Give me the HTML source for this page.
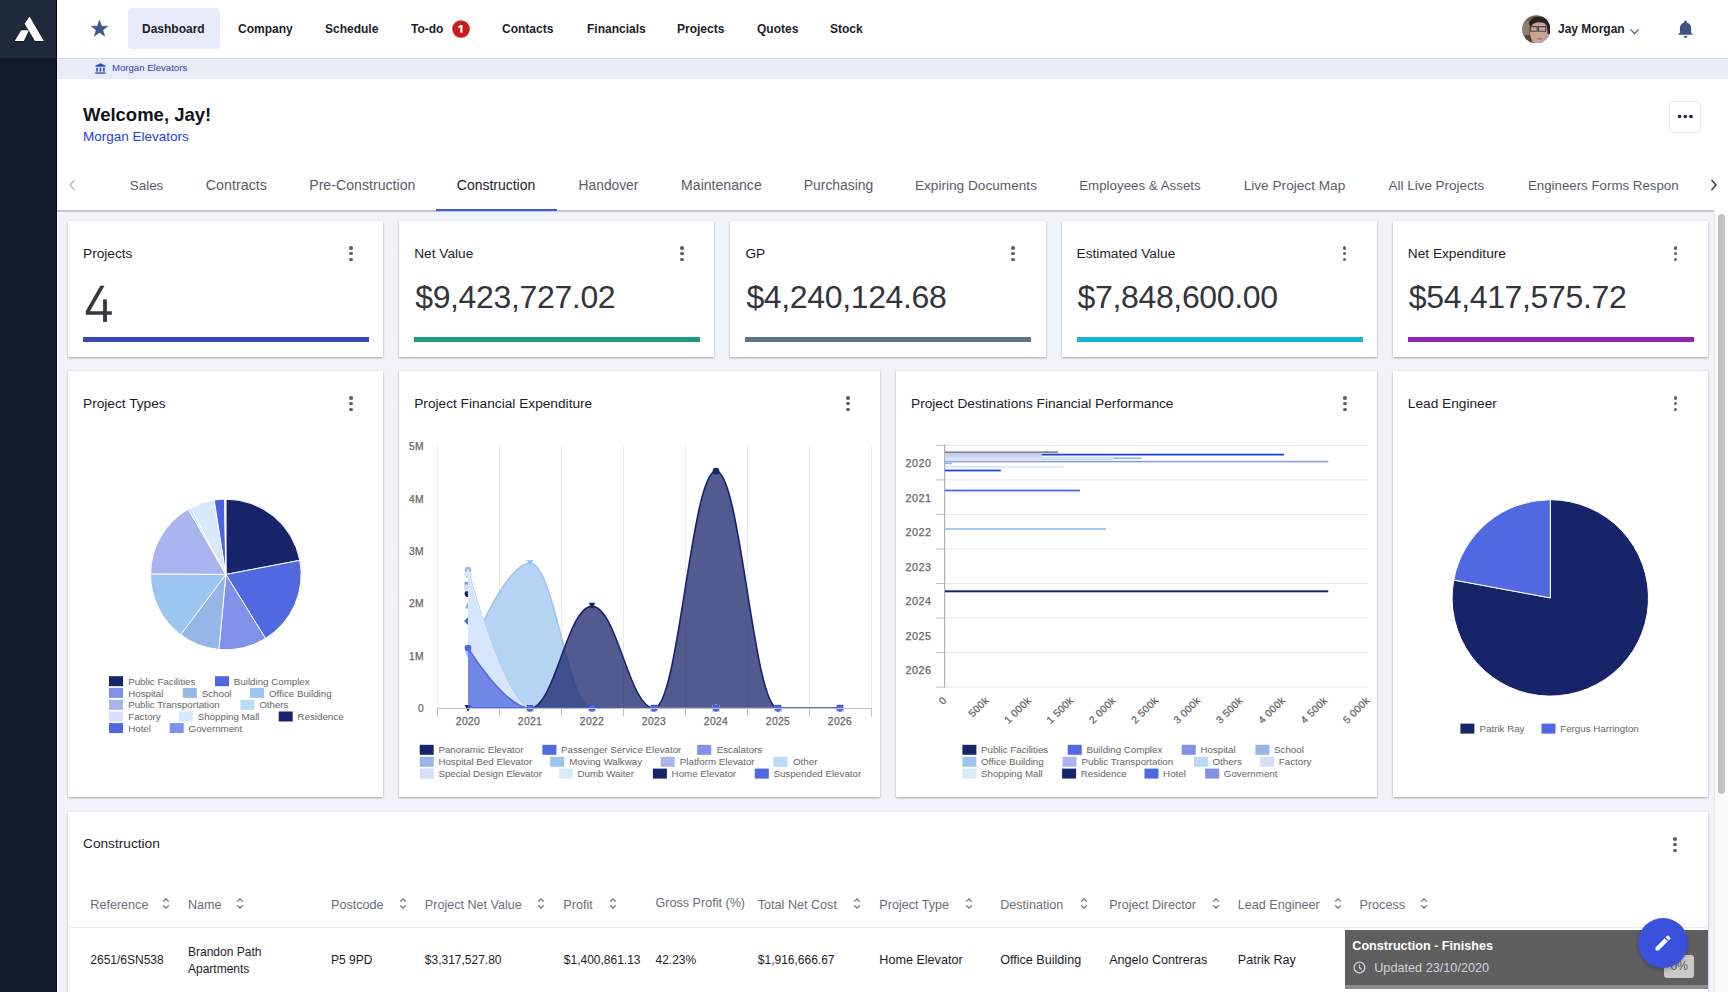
<!DOCTYPE html>
<html><head><meta charset="utf-8">
<style>
*{box-sizing:border-box;margin:0;padding:0}
html,body{width:1728px;height:992px;overflow:hidden;background:#fff;font-family:"Liberation Sans",sans-serif;color:#1b1d29}
.abs{position:absolute}
#side{left:0;top:0;width:57px;height:992px;background:#121a2c;border-right:1px solid #05070c}
#logo{left:0;top:0;width:56px;height:58px;background:#1e293b}
#nav{left:57px;top:0;width:1671px;height:59px;background:#fff;border-bottom:1px solid #d7dbe3}
.ni{position:absolute;top:22px;font-size:12px;font-weight:700;color:#1b1d29;white-space:nowrap;line-height:14px}
#pill{left:128px;top:8px;width:92px;height:41px;background:#e8ebfa;border-radius:4px}
#crumb{left:57px;top:59px;width:1671px;height:20px;background:#e8ecf9}
#crumb span{position:absolute;left:55px;top:3px;font-size:9.6px;color:#3443a8;white-space:nowrap}
#welcome{left:83px;top:104px;font-size:18.5px;font-weight:700;color:#11131c;white-space:nowrap}
#company{left:83px;top:129px;font-size:13.5px;color:#1e3ee0;white-space:nowrap}
#more{left:1669px;top:101px;width:32px;height:32px;border:1px solid #e3e6ec;border-radius:4px;background:#fff}
.tab{position:absolute;top:177px;font-size:13.6px;color:#5a5d66;white-space:nowrap;line-height:16px}
#tabline{left:57px;top:210px;width:1657px;height:2px;background:#c4c8ce}
#tabact{left:436px;top:209px;width:121px;height:2px;background:#4557de}
#content{left:58px;top:212px;width:1656px;height:780px;background:#f0f3f7}
#sbar{left:1714px;top:212px;width:14px;height:780px;background:#fafafa;border-left:1px solid #e8e8ea}
#sthumb{left:1717.5px;top:213.5px;width:7.8px;height:580px;background:#c1c1c1;border-radius:4px}
.card{position:absolute;background:#fff;box-shadow:0 1px 2px rgba(0,0,0,0.28),0 0 1px rgba(0,0,0,0.12)}
.ctitle{position:absolute;left:15px;top:24.5px;font-size:13.7px;color:#1b1d29;white-space:nowrap;line-height:16px}
.kebab{position:absolute;width:4px;height:16px}
.kebab i{position:absolute;left:0;width:3.6px;height:3.6px;border-radius:50%;background:#5f6168}
.big{position:absolute;left:16px;top:58px;font-size:32px;color:#33353c;white-space:nowrap;letter-spacing:-0.35px;line-height:37px}
.lg{font-size:9.75px;fill:#666;font-family:"Liberation Sans",sans-serif}
.ax{font-size:10.3px;fill:#666;stroke:#666;stroke-width:0.25px;font-family:"Liberation Sans",sans-serif;letter-spacing:0.35px}
.th{position:absolute;font-size:12.6px;color:#6b6e76;white-space:nowrap;line-height:14px}
.td{position:absolute;font-size:12px;color:#1b1d29;white-space:nowrap;line-height:14px}
.bar{position:absolute;left:15px;top:116px;width:286px;height:5px}
</style></head><body>
<div id="side" class="abs"></div>
<div id="logo" class="abs">
<svg width="56" height="58" viewBox="0 0 56 58" style="position:absolute;left:0;top:0"><g fill="#fff" stroke="#070a14" stroke-width="0.9" stroke-linejoin="miter" paint-order="stroke"><path d="M29.5 16.6 L43.9 41 L35 41 L24.6 23.8 Z"/><path d="M21.3 30.3 L28.9 30.3 L23.9 41 L14.6 41 Z"/></g></svg>
</div>
<div id="nav" class="abs"></div>
<div id="pill" class="abs"></div>
<svg class="abs" style="left:80px;top:10px" width="40" height="40" viewBox="0 0 40 40"><path d="M19.50 10.30 L21.55 16.18 L27.77 16.31 L22.81 20.08 L24.61 26.04 L19.50 22.48 L14.39 26.04 L16.19 20.08 L11.23 16.31 L17.45 16.18Z" fill="#3e5283" stroke="#3e5283" stroke-width="0.6" stroke-linejoin="round"/></svg>
<div class="ni" style="left:142px">Dashboard</div>
<div class="ni" style="left:238px">Company</div>
<div class="ni" style="left:325px">Schedule</div>
<div class="ni" style="left:411px">To-do</div>
<svg class="abs" style="left:451.5px;top:20px" width="18" height="18" viewBox="0 0 18 18"><circle cx="9" cy="9" r="8.8" fill="#c81e1e"/><path d="M8.2 5 H10.5 V12.8 H8.3 V7.6 L6.2 8.1 V6.4 Z" fill="#fff"/></svg>
<div class="ni" style="left:502px">Contacts</div>
<div class="ni" style="left:587px">Financials</div>
<div class="ni" style="left:677px">Projects</div>
<div class="ni" style="left:757px">Quotes</div>
<div class="ni" style="left:830px">Stock</div>
<svg class="abs" style="left:1521.9px;top:14.9px" width="28.6" height="28.6" viewBox="0 0 28.6 28.6"><defs><clipPath id="av"><circle cx="14.3" cy="14.3" r="14.1"/></clipPath></defs><g clip-path="url(#av)"><rect width="29" height="29" fill="#6f6455"/><rect x="1" y="6" width="6" height="18" fill="#8b806d"/><rect x="3" y="20" width="6" height="9" fill="#4e4438"/><ellipse cx="17.6" cy="17.6" rx="9.6" ry="12.5" fill="#c9a29a"/><path d="M7 9 C8 3 13 1.5 18 1.8 C24 2.2 27.5 6 28 12 L28 19 L25.6 19 C25.6 13 24.5 9 22 8 C17 6.5 12 7 9 11 Z" fill="#2a2220"/><path d="M8.6 11.6 h6.6 v4.6 h-6.6z M16.6 11.6 h7.2 v4.6 h-7.2z M15.2 13 h1.4" fill="none" stroke="#4b4444" stroke-width="1.1"/><ellipse cx="17.8" cy="23.8" rx="3.2" ry="1" fill="#b07e7a"/></g></svg>
<div class="ni" style="left:1558px">Jay Morgan</div>
<svg class="abs" style="left:1629px;top:27px" width="11" height="8" viewBox="0 0 11 8"><path d="M1.4 2.4 L5.6 6.6 L9.6 2.4" stroke="#3e5283" stroke-width="1.2" fill="none"/></svg>
<svg class="abs" style="left:1676px;top:19px" width="19" height="20" viewBox="0 0 19 20"><path d="M9.5 1.5c.8 0 1.3.6 1.3 1.3v.6c2.6.6 4.3 2.9 4.3 5.6v4.5l1.8 2.2H2.1l1.8-2.2V9c0-2.7 1.7-5 4.3-5.6v-.6c0-.7.5-1.3 1.3-1.3z" fill="#3e5283"/><path d="M7.6 17h3.8c0 1.1-.8 1.9-1.9 1.9S7.6 18.1 7.6 17z" fill="#3e5283"/></svg>

<div id="crumb" class="abs">
<svg style="position:absolute;left:38px;top:4px" width="11" height="11" viewBox="0 0 11 11"><path d="M5.5 0.3 L10.7 2.8 V3.8 H0.3 V2.8 Z" fill="#2f45c8"/><rect x="1.3" y="4.7" width="1.6" height="4" fill="#2f45c8"/><rect x="4.7" y="4.7" width="1.6" height="4" fill="#2f45c8"/><rect x="8.1" y="4.7" width="1.6" height="4" fill="#2f45c8"/><rect x="0.3" y="9.4" width="10.4" height="1.3" fill="#2f45c8"/></svg>
<span>Morgan Elevators</span></div>

<div id="welcome" class="abs">Welcome, Jay!</div>
<div id="company" class="abs">Morgan Elevators</div>
<div id="more" class="abs"><svg width="30" height="30" viewBox="0 0 30 30" style="position:absolute;left:0;top:0"><circle cx="9.6" cy="14.5" r="1.8" fill="#1b2340"/><circle cx="15.3" cy="14.5" r="1.8" fill="#1b2340"/><circle cx="21" cy="14.5" r="1.8" fill="#1b2340"/></svg></div>

<svg class="abs" style="left:67px;top:178px" width="10" height="14" viewBox="0 0 10 14"><path d="M7.5 2 L3 7 L7.5 12" stroke="#b9bcc3" stroke-width="1.4" fill="none"/></svg>
<div class="tab" style="left:129.8px;top:177.50px;font-size:13.39px">Sales</div>
<div class="tab" style="left:205.8px;top:177.00px;font-size:14.29px">Contracts</div>
<div class="tab" style="left:309.2px;top:177.00px;font-size:14.16px">Pre-Construction</div>
<div class="tab" style="left:456.8px;top:177.00px;font-size:13.98px;color:#1b1d29">Construction</div>
<div class="tab" style="left:578.6px;top:177.50px;font-size:13.79px">Handover</div>
<div class="tab" style="left:681.1px;top:177.00px;font-size:14.08px">Maintenance</div>
<div class="tab" style="left:803.8px;top:177.00px;font-size:13.89px">Purchasing</div>
<div class="tab" style="left:914.9px;top:177.50px;font-size:13.65px">Expiring Documents</div>
<div class="tab" style="left:1079.2px;top:177.50px;font-size:13.33px">Employees &amp; Assets</div>
<div class="tab" style="left:1243.7px;top:177.50px;font-size:13.65px">Live Project Map</div>
<div class="tab" style="left:1388.5px;top:177.50px;font-size:13.46px">All Live Projects</div>
<div class="tab" style="left:1527.9px;top:177.50px;font-size:13.3px">Engineers Forms Respon</div>
<svg class="abs" style="left:1709px;top:178px" width="10" height="14" viewBox="0 0 10 14"><path d="M2.5 2 L7 7 L2.5 12" stroke="#3a3d46" stroke-width="1.5" fill="none"/></svg>
<div id="tabline" class="abs"></div>
<div id="tabact" class="abs"></div>

<div id="content" class="abs"></div>
<div id="sbar" class="abs"></div>
<div id="sthumb" class="abs"></div>

<!-- STAT CARDS -->
<div class="card" style="left:68px;top:221px;width:315.2px;height:136px">
 <div class="ctitle">Projects</div>
 <div class="kebab" style="left:281px;top:25px"><i style="top:0"></i><i style="top:5.9px"></i><i style="top:11.8px"></i></div>
 <svg class="abs" style="left:0;top:0" width="130" height="110" viewBox="68 221 130 110"><path d="M100.3 285.8 H104.5 L89.9 311.2 H111.8 V314.7 H85.8 V311.0 Z" fill="#37383d"/><rect x="103.1" y="299.4" width="3.8" height="22.5" fill="#37383d"/></svg>
 <div class="bar" style="background:#3b48b8"></div>
</div>
<div class="card" style="left:399.2px;top:221px;width:315.2px;height:136px">
 <div class="ctitle">Net Value</div>
 <div class="kebab" style="left:281px;top:25px"><i style="top:0"></i><i style="top:5.9px"></i><i style="top:11.8px"></i></div>
 <div class="big">$9,423,727.02</div>
 <div class="bar" style="background:#1f9a88"></div>
</div>
<div class="card" style="left:730.4px;top:221px;width:315.2px;height:136px">
 <div class="ctitle">GP</div>
 <div class="kebab" style="left:281px;top:25px"><i style="top:0"></i><i style="top:5.9px"></i><i style="top:11.8px"></i></div>
 <div class="big">$4,240,124.68</div>
 <div class="bar" style="background:#5b7785"></div>
</div>
<div class="card" style="left:1061.6px;top:221px;width:315.2px;height:136px">
 <div class="ctitle">Estimated Value</div>
 <div class="kebab" style="left:281px;top:25px"><i style="top:0"></i><i style="top:5.9px"></i><i style="top:11.8px"></i></div>
 <div class="big">$7,848,600.00</div>
 <div class="bar" style="background:#18b4d4"></div>
</div>
<div class="card" style="left:1392.8px;top:221px;width:315.2px;height:136px">
 <div class="ctitle">Net Expenditure</div>
 <div class="kebab" style="left:281px;top:25px"><i style="top:0"></i><i style="top:5.9px"></i><i style="top:11.8px"></i></div>
 <div class="big">$54,417,575.72</div>
 <div class="bar" style="background:#9122b4"></div>
</div>

<!-- CHART CARDS -->
<div class="card" id="c1" style="left:68px;top:371px;width:315.2px;height:426px">
 <div class="ctitle">Project Types</div>
 <div class="kebab" style="left:281px;top:25px"><i style="top:0"></i><i style="top:5.9px"></i><i style="top:11.8px"></i></div>
</div>
<div class="card" id="c2" style="left:399.2px;top:371px;width:480.8px;height:426px">
 <div class="ctitle">Project Financial Expenditure</div>
 <div class="kebab" style="left:447px;top:25px"><i style="top:0"></i><i style="top:5.9px"></i><i style="top:11.8px"></i></div>
</div>
<div class="card" id="c3" style="left:896px;top:371px;width:480.8px;height:426px">
 <div class="ctitle">Project Destinations Financial Performance</div>
 <div class="kebab" style="left:447px;top:25px"><i style="top:0"></i><i style="top:5.9px"></i><i style="top:11.8px"></i></div>
</div>
<div class="card" id="c4" style="left:1392.8px;top:371px;width:315.2px;height:426px">
 <div class="ctitle">Lead Engineer</div>
 <div class="kebab" style="left:281px;top:25px"><i style="top:0"></i><i style="top:5.9px"></i><i style="top:11.8px"></i></div>
</div>

<svg class="abs" style="left:0;top:0" width="1728" height="992" viewBox="0 0 1728 992">
<defs><clipPath id="plotclip"><rect x="437" y="440" width="434" height="269"/></clipPath></defs>
<path d="M225.85 574.45L225.85 499.15A75.3 75.3 0 0 1 299.82 560.34Z" fill="#18246a" stroke="#fff" stroke-width="1" stroke-linejoin="round"/>
<path d="M225.85 574.45L299.82 560.34A75.3 75.3 0 0 1 265.53 638.45Z" fill="#5068e0" stroke="#fff" stroke-width="1" stroke-linejoin="round"/>
<path d="M225.85 574.45L265.53 638.45A75.3 75.3 0 0 1 218.89 649.43Z" fill="#8091ea" stroke="#fff" stroke-width="1" stroke-linejoin="round"/>
<path d="M225.85 574.45L218.89 649.43A75.3 75.3 0 0 1 180.64 634.67Z" fill="#95b6e6" stroke="#fff" stroke-width="1" stroke-linejoin="round"/>
<path d="M225.85 574.45L180.64 634.67A75.3 75.3 0 0 1 150.55 573.92Z" fill="#9cc6f0" stroke="#fff" stroke-width="1" stroke-linejoin="round"/>
<path d="M225.85 574.45L150.55 573.92A75.3 75.3 0 0 1 188.43 509.11Z" fill="#aab5f0" stroke="#fff" stroke-width="1" stroke-linejoin="round"/>
<path d="M225.85 574.45L188.43 509.11A75.3 75.3 0 0 1 190.61 507.9Z" fill="#b9daf8" stroke="#fff" stroke-width="1" stroke-linejoin="round"/>
<path d="M225.85 574.45L190.61 507.9A75.3 75.3 0 0 1 214.2 500.06Z" fill="#d9e9fc" stroke="#fff" stroke-width="1" stroke-linejoin="round"/>
<path d="M225.85 574.45L214.2 500.06A75.3 75.3 0 0 1 224.67 499.16Z" fill="#4a62e0" stroke="#fff" stroke-width="1" stroke-linejoin="round"/>
<path d="M225.85 574.45L224.67 499.16A75.3 75.3 0 0 1 225.85 499.15Z" fill="#8091ea" stroke="#fff" stroke-width="1" stroke-linejoin="round"/>
<path d="M1550.3 597.9L1550.3 499.7A98.2 98.2 0 1 1 1453.74 580Z" fill="#18246a" stroke="#fff" stroke-width="1" stroke-linejoin="round"/>
<path d="M1550.3 597.9L1453.74 580A98.2 98.2 0 0 1 1550.3 499.7Z" fill="#5068e0" stroke="#fff" stroke-width="1" stroke-linejoin="round"/>
<rect x="109" y="676.2" width="14" height="10" fill="#18246a"/>
<text x="128.2" y="684.8" class="lg">Public Facilities</text>
<rect x="215" y="676.2" width="14" height="10" fill="#5068e0"/>
<text x="233.8" y="684.8" class="lg">Building Complex</text>
<rect x="109" y="687.9" width="14" height="10" fill="#8091ea"/>
<text x="128.2" y="696.5" class="lg">Hospital</text>
<rect x="182.8" y="687.9" width="14" height="10" fill="#95b6e6"/>
<text x="201.7" y="696.5" class="lg">School</text>
<rect x="250" y="687.9" width="14" height="10" fill="#9cc6f0"/>
<text x="268.9" y="696.5" class="lg">Office Building</text>
<rect x="109" y="699.8" width="14" height="10" fill="#aab5f0"/>
<text x="128.2" y="708.4" class="lg">Public Transportation</text>
<rect x="240.4" y="699.8" width="14" height="10" fill="#b9daf8"/>
<text x="259.2" y="708.4" class="lg">Others</text>
<rect x="109" y="711.5" width="14" height="10" fill="#d9ddfc"/>
<text x="128.2" y="720.1" class="lg">Factory</text>
<rect x="178.9" y="711.5" width="14" height="10" fill="#d9e9fc"/>
<text x="197.7" y="720.1" class="lg">Shopping Mall</text>
<rect x="278.7" y="711.5" width="14" height="10" fill="#18246a"/>
<text x="297.5" y="720.1" class="lg">Residence</text>
<rect x="109" y="723.1" width="14" height="10" fill="#5068e0"/>
<text x="128.2" y="731.7" class="lg">Hotel</text>
<rect x="169.7" y="723.1" width="14" height="10" fill="#8091ea"/>
<text x="188.6" y="731.7" class="lg">Government</text>
<rect x="419.7" y="744.8" width="14" height="10" fill="#18246a"/>
<text x="438.4" y="753.4" class="lg">Panoramic Elevator</text>
<rect x="542.4" y="744.8" width="14" height="10" fill="#5068e0"/>
<text x="561" y="753.4" class="lg">Passenger Service Elevator</text>
<rect x="697.2" y="744.8" width="14" height="10" fill="#8091ea"/>
<text x="716.7" y="753.4" class="lg">Escalators</text>
<rect x="419.7" y="756.8" width="14" height="10" fill="#95b6e6"/>
<text x="438.4" y="765.4" class="lg">Hospital Bed Elevator</text>
<rect x="550.2" y="756.8" width="14" height="10" fill="#9cc6f0"/>
<text x="569.3" y="765.4" class="lg">Moving Walkway</text>
<rect x="660.7" y="756.8" width="14" height="10" fill="#aab5f0"/>
<text x="679.8" y="765.4" class="lg">Platform Elevator</text>
<rect x="773.4" y="756.8" width="14" height="10" fill="#b9daf8"/>
<text x="793" y="765.4" class="lg">Other</text>
<rect x="419.7" y="768.6" width="14" height="10" fill="#d9ddfc"/>
<text x="438.4" y="777.2" class="lg">Special Design Elevator</text>
<rect x="558.9" y="768.6" width="14" height="10" fill="#d9e9fc"/>
<text x="577.5" y="777.2" class="lg">Dumb Waiter</text>
<rect x="652.9" y="768.6" width="14" height="10" fill="#18246a"/>
<text x="671.6" y="777.2" class="lg">Home Elevator</text>
<rect x="754.8" y="768.6" width="14" height="10" fill="#5068e0"/>
<text x="773.4" y="777.2" class="lg">Suspended Elevator</text>
<rect x="962.4" y="744.8" width="14" height="10" fill="#18246a"/>
<text x="981" y="753.4" class="lg">Public Facilities</text>
<rect x="1067.7" y="744.8" width="14" height="10" fill="#5068e0"/>
<text x="1086.4" y="753.4" class="lg">Building Complex</text>
<rect x="1181.7" y="744.8" width="14" height="10" fill="#8091ea"/>
<text x="1200.4" y="753.4" class="lg">Hospital</text>
<rect x="1255.4" y="744.8" width="14" height="10" fill="#95b6e6"/>
<text x="1274" y="753.4" class="lg">School</text>
<rect x="962.4" y="756.8" width="14" height="10" fill="#9cc6f0"/>
<text x="981" y="765.4" class="lg">Office Building</text>
<rect x="1062.5" y="756.8" width="14" height="10" fill="#aab5f0"/>
<text x="1081.6" y="765.4" class="lg">Public Transportation</text>
<rect x="1193.9" y="756.8" width="14" height="10" fill="#b9daf8"/>
<text x="1212.5" y="765.4" class="lg">Others</text>
<rect x="1260.2" y="756.8" width="14" height="10" fill="#d9ddfc"/>
<text x="1278.8" y="765.4" class="lg">Factory</text>
<rect x="962.4" y="768.6" width="14" height="10" fill="#d9e9fc"/>
<text x="981" y="777.2" class="lg">Shopping Mall</text>
<rect x="1062.1" y="768.6" width="14" height="10" fill="#18246a"/>
<text x="1080.7" y="777.2" class="lg">Residence</text>
<rect x="1144.5" y="768.6" width="14" height="10" fill="#5068e0"/>
<text x="1163.1" y="777.2" class="lg">Hotel</text>
<rect x="1205.2" y="768.6" width="14" height="10" fill="#8091ea"/>
<text x="1223.8" y="777.2" class="lg">Government</text>
<rect x="1460.4" y="723.6" width="14" height="10" fill="#18246a"/>
<text x="1479.5" y="732.2" class="lg">Patrik Ray</text>
<rect x="1541.5" y="723.6" width="14" height="10" fill="#5068e0"/>
<text x="1560.2" y="732.2" class="lg">Fergus Harrington</text>
<line x1="437.5" y1="446" x2="437.5" y2="708" stroke="#e6ebf3" stroke-width="1"/>
<line x1="499.5" y1="446" x2="499.5" y2="708" stroke="#ebebeb" stroke-width="1"/>
<line x1="561.5" y1="446" x2="561.5" y2="708" stroke="#ebebeb" stroke-width="1"/>
<line x1="623.5" y1="446" x2="623.5" y2="708" stroke="#ebebeb" stroke-width="1"/>
<line x1="685.5" y1="446" x2="685.5" y2="708" stroke="#ebebeb" stroke-width="1"/>
<line x1="747.5" y1="446" x2="747.5" y2="708" stroke="#ebebeb" stroke-width="1"/>
<line x1="809.5" y1="446" x2="809.5" y2="708" stroke="#ebebeb" stroke-width="1"/>
<line x1="871.5" y1="446" x2="871.5" y2="708" stroke="#ebebeb" stroke-width="1"/>
<path d="M468 593.65C468 593.65 505.2 708.3 530 708.3C554.8 708.3 567.2 708.3 592 708.3C616.8 708.3 629.2 708.3 654 708.3C678.8 708.3 691.2 471.15 716 471.15C740.8 471.15 753.2 708.3 778 708.3C802.8 708.3 840 708.3 840 708.3L840 708.3L468 708.3Z" fill="#18246a" fill-opacity="0.75" clip-path="url(#plotclip)"/>
<path d="M468 593.65C468 593.65 505.2 708.3 530 708.3C554.8 708.3 567.2 708.3 592 708.3C616.8 708.3 629.2 708.3 654 708.3C678.8 708.3 691.2 471.15 716 471.15C740.8 471.15 753.2 708.3 778 708.3C802.8 708.3 840 708.3 840 708.3" fill="none" stroke="#18246a" stroke-width="1.6" clip-path="url(#plotclip)"/>
<circle cx="468" cy="593.65" r="3.4" fill="#18246a"/>
<circle cx="530" cy="708.3" r="3.4" fill="#18246a"/>
<circle cx="592" cy="708.3" r="3.4" fill="#18246a"/>
<circle cx="654" cy="708.3" r="3.4" fill="#18246a"/>
<circle cx="716" cy="471.15" r="3.4" fill="#18246a"/>
<circle cx="778" cy="708.3" r="3.4" fill="#18246a"/>
<circle cx="840" cy="708.3" r="3.4" fill="#18246a"/>
<path d="M468 620.88C468 620.88 505.2 708.3 530 708.3C554.8 708.3 567.2 708.3 592 708.3C616.8 708.3 629.2 708.3 654 708.3C678.8 708.3 691.2 708.3 716 708.3C740.8 708.3 753.2 708.3 778 708.3C802.8 708.3 840 708.3 840 708.3L840 708.3L468 708.3Z" fill="#5068e0" fill-opacity="0.75" clip-path="url(#plotclip)"/>
<path d="M468 620.88C468 620.88 505.2 708.3 530 708.3C554.8 708.3 567.2 708.3 592 708.3C616.8 708.3 629.2 708.3 654 708.3C678.8 708.3 691.2 708.3 716 708.3C740.8 708.3 753.2 708.3 778 708.3C802.8 708.3 840 708.3 840 708.3" fill="none" stroke="#5068e0" stroke-width="1.6" clip-path="url(#plotclip)"/>
<path d="M468 616.88L472 620.88L468 624.88L464 620.88Z" fill="#5068e0"/>
<path d="M530 704.3L534 708.3L530 712.3L526 708.3Z" fill="#5068e0"/>
<path d="M592 704.3L596 708.3L592 712.3L588 708.3Z" fill="#5068e0"/>
<path d="M654 704.3L658 708.3L654 712.3L650 708.3Z" fill="#5068e0"/>
<path d="M716 704.3L720 708.3L716 712.3L712 708.3Z" fill="#5068e0"/>
<path d="M778 704.3L782 708.3L778 712.3L774 708.3Z" fill="#5068e0"/>
<path d="M840 704.3L844 708.3L840 712.3L836 708.3Z" fill="#5068e0"/>
<path d="M468 585.28C468 585.28 505.2 708.3 530 708.3C554.8 708.3 567.2 708.3 592 708.3C616.8 708.3 629.2 708.3 654 708.3C678.8 708.3 691.2 708.3 716 708.3C740.8 708.3 753.2 708.3 778 708.3C802.8 708.3 840 708.3 840 708.3L840 708.3L468 708.3Z" fill="#8091ea" fill-opacity="0.75" clip-path="url(#plotclip)"/>
<path d="M468 585.28C468 585.28 505.2 708.3 530 708.3C554.8 708.3 567.2 708.3 592 708.3C616.8 708.3 629.2 708.3 654 708.3C678.8 708.3 691.2 708.3 716 708.3C740.8 708.3 753.2 708.3 778 708.3C802.8 708.3 840 708.3 840 708.3" fill="none" stroke="#8091ea" stroke-width="1.6" clip-path="url(#plotclip)"/>
<rect x="464.6" y="581.88" width="6.8" height="6.8" fill="#8091ea"/>
<rect x="526.6" y="704.9" width="6.8" height="6.8" fill="#8091ea"/>
<rect x="588.6" y="704.9" width="6.8" height="6.8" fill="#8091ea"/>
<rect x="650.6" y="704.9" width="6.8" height="6.8" fill="#8091ea"/>
<rect x="712.6" y="704.9" width="6.8" height="6.8" fill="#8091ea"/>
<rect x="774.6" y="704.9" width="6.8" height="6.8" fill="#8091ea"/>
<rect x="836.6" y="704.9" width="6.8" height="6.8" fill="#8091ea"/>
<path d="M468 605.17C468 605.17 505.2 708.3 530 708.3C554.8 708.3 567.2 708.3 592 708.3C616.8 708.3 629.2 708.3 654 708.3C678.8 708.3 691.2 708.3 716 708.3C740.8 708.3 753.2 708.3 778 708.3C802.8 708.3 840 708.3 840 708.3L840 708.3L468 708.3Z" fill="#95b6e6" fill-opacity="0.75" clip-path="url(#plotclip)"/>
<path d="M468 605.17C468 605.17 505.2 708.3 530 708.3C554.8 708.3 567.2 708.3 592 708.3C616.8 708.3 629.2 708.3 654 708.3C678.8 708.3 691.2 708.3 716 708.3C740.8 708.3 753.2 708.3 778 708.3C802.8 708.3 840 708.3 840 708.3" fill="none" stroke="#95b6e6" stroke-width="1.6" clip-path="url(#plotclip)"/>
<path d="M468 601.77L471.4 608.57L464.6 608.57Z" fill="#95b6e6"/>
<path d="M530 704.9L533.4 711.7L526.6 711.7Z" fill="#95b6e6"/>
<path d="M592 704.9L595.4 711.7L588.6 711.7Z" fill="#95b6e6"/>
<path d="M654 704.9L657.4 711.7L650.6 711.7Z" fill="#95b6e6"/>
<path d="M716 704.9L719.4 711.7L712.6 711.7Z" fill="#95b6e6"/>
<path d="M778 704.9L781.4 711.7L774.6 711.7Z" fill="#95b6e6"/>
<path d="M840 704.9L843.4 711.7L836.6 711.7Z" fill="#95b6e6"/>
<path d="M468 654.9C468 654.9 505.2 563.29 530 563.29C554.8 563.29 567.2 708.3 592 708.3C616.8 708.3 629.2 708.3 654 708.3C678.8 708.3 691.2 708.3 716 708.3C740.8 708.3 753.2 708.3 778 708.3C802.8 708.3 840 708.3 840 708.3L840 708.3L468 708.3Z" fill="#9cc6f0" fill-opacity="0.75" clip-path="url(#plotclip)"/>
<path d="M468 654.9C468 654.9 505.2 563.29 530 563.29C554.8 563.29 567.2 708.3 592 708.3C616.8 708.3 629.2 708.3 654 708.3C678.8 708.3 691.2 708.3 716 708.3C740.8 708.3 753.2 708.3 778 708.3C802.8 708.3 840 708.3 840 708.3" fill="none" stroke="#9cc6f0" stroke-width="1.6" clip-path="url(#plotclip)"/>
<path d="M464.6 651.5L471.4 651.5L468 658.3Z" fill="#9cc6f0"/>
<path d="M526.6 559.89L533.4 559.89L530 566.69Z" fill="#9cc6f0"/>
<path d="M588.6 704.9L595.4 704.9L592 711.7Z" fill="#9cc6f0"/>
<path d="M650.6 704.9L657.4 704.9L654 711.7Z" fill="#9cc6f0"/>
<path d="M712.6 704.9L719.4 704.9L716 711.7Z" fill="#9cc6f0"/>
<path d="M774.6 704.9L781.4 704.9L778 711.7Z" fill="#9cc6f0"/>
<path d="M836.6 704.9L843.4 704.9L840 711.7Z" fill="#9cc6f0"/>
<path d="M468 570.1C468 570.1 505.2 708.3 530 708.3C554.8 708.3 567.2 708.3 592 708.3C616.8 708.3 629.2 708.3 654 708.3C678.8 708.3 691.2 708.3 716 708.3C740.8 708.3 753.2 708.3 778 708.3C802.8 708.3 840 708.3 840 708.3L840 708.3L468 708.3Z" fill="#aab5f0" fill-opacity="0.75" clip-path="url(#plotclip)"/>
<path d="M468 570.1C468 570.1 505.2 708.3 530 708.3C554.8 708.3 567.2 708.3 592 708.3C616.8 708.3 629.2 708.3 654 708.3C678.8 708.3 691.2 708.3 716 708.3C740.8 708.3 753.2 708.3 778 708.3C802.8 708.3 840 708.3 840 708.3" fill="none" stroke="#aab5f0" stroke-width="1.6" clip-path="url(#plotclip)"/>
<circle cx="468" cy="570.1" r="3.4" fill="#aab5f0"/>
<circle cx="530" cy="708.3" r="3.4" fill="#aab5f0"/>
<circle cx="592" cy="708.3" r="3.4" fill="#aab5f0"/>
<circle cx="654" cy="708.3" r="3.4" fill="#aab5f0"/>
<circle cx="716" cy="708.3" r="3.4" fill="#aab5f0"/>
<circle cx="778" cy="708.3" r="3.4" fill="#aab5f0"/>
<circle cx="840" cy="708.3" r="3.4" fill="#aab5f0"/>
<path d="M468 574.81C468 574.81 505.2 708.3 530 708.3C554.8 708.3 567.2 708.3 592 708.3C616.8 708.3 629.2 708.3 654 708.3C678.8 708.3 691.2 708.3 716 708.3C740.8 708.3 753.2 708.3 778 708.3C802.8 708.3 840 708.3 840 708.3L840 708.3L468 708.3Z" fill="#b9daf8" fill-opacity="0.75" clip-path="url(#plotclip)"/>
<path d="M468 574.81C468 574.81 505.2 708.3 530 708.3C554.8 708.3 567.2 708.3 592 708.3C616.8 708.3 629.2 708.3 654 708.3C678.8 708.3 691.2 708.3 716 708.3C740.8 708.3 753.2 708.3 778 708.3C802.8 708.3 840 708.3 840 708.3" fill="none" stroke="#b9daf8" stroke-width="1.6" clip-path="url(#plotclip)"/>
<path d="M468 570.81L472 574.81L468 578.81L464 574.81Z" fill="#b9daf8"/>
<path d="M530 704.3L534 708.3L530 712.3L526 708.3Z" fill="#b9daf8"/>
<path d="M592 704.3L596 708.3L592 712.3L588 708.3Z" fill="#b9daf8"/>
<path d="M654 704.3L658 708.3L654 712.3L650 708.3Z" fill="#b9daf8"/>
<path d="M716 704.3L720 708.3L716 712.3L712 708.3Z" fill="#b9daf8"/>
<path d="M778 704.3L782 708.3L778 712.3L774 708.3Z" fill="#b9daf8"/>
<path d="M840 704.3L844 708.3L840 712.3L836 708.3Z" fill="#b9daf8"/>
<path d="M468 587.89C468 587.89 505.2 708.3 530 708.3C554.8 708.3 567.2 708.3 592 708.3C616.8 708.3 629.2 708.3 654 708.3C678.8 708.3 691.2 708.3 716 708.3C740.8 708.3 753.2 708.3 778 708.3C802.8 708.3 840 708.3 840 708.3L840 708.3L468 708.3Z" fill="#d9ddfc" fill-opacity="0.75" clip-path="url(#plotclip)"/>
<path d="M468 587.89C468 587.89 505.2 708.3 530 708.3C554.8 708.3 567.2 708.3 592 708.3C616.8 708.3 629.2 708.3 654 708.3C678.8 708.3 691.2 708.3 716 708.3C740.8 708.3 753.2 708.3 778 708.3C802.8 708.3 840 708.3 840 708.3" fill="none" stroke="#d9ddfc" stroke-width="1.6" clip-path="url(#plotclip)"/>
<rect x="464.6" y="584.5" width="6.8" height="6.8" fill="#d9ddfc"/>
<rect x="526.6" y="704.9" width="6.8" height="6.8" fill="#d9ddfc"/>
<rect x="588.6" y="704.9" width="6.8" height="6.8" fill="#d9ddfc"/>
<rect x="650.6" y="704.9" width="6.8" height="6.8" fill="#d9ddfc"/>
<rect x="712.6" y="704.9" width="6.8" height="6.8" fill="#d9ddfc"/>
<rect x="774.6" y="704.9" width="6.8" height="6.8" fill="#d9ddfc"/>
<rect x="836.6" y="704.9" width="6.8" height="6.8" fill="#d9ddfc"/>
<path d="M468 572.19C468 572.19 505.2 708.3 530 708.3C554.8 708.3 567.2 708.3 592 708.3C616.8 708.3 629.2 708.3 654 708.3C678.8 708.3 691.2 708.3 716 708.3C740.8 708.3 753.2 708.3 778 708.3C802.8 708.3 840 708.3 840 708.3L840 708.3L468 708.3Z" fill="#d9e9fc" fill-opacity="0.75" clip-path="url(#plotclip)"/>
<path d="M468 572.19C468 572.19 505.2 708.3 530 708.3C554.8 708.3 567.2 708.3 592 708.3C616.8 708.3 629.2 708.3 654 708.3C678.8 708.3 691.2 708.3 716 708.3C740.8 708.3 753.2 708.3 778 708.3C802.8 708.3 840 708.3 840 708.3" fill="none" stroke="#d9e9fc" stroke-width="1.6" clip-path="url(#plotclip)"/>
<path d="M468 568.79L471.4 575.59L464.6 575.59Z" fill="#d9e9fc"/>
<path d="M530 704.9L533.4 711.7L526.6 711.7Z" fill="#d9e9fc"/>
<path d="M592 704.9L595.4 711.7L588.6 711.7Z" fill="#d9e9fc"/>
<path d="M654 704.9L657.4 711.7L650.6 711.7Z" fill="#d9e9fc"/>
<path d="M716 704.9L719.4 711.7L712.6 711.7Z" fill="#d9e9fc"/>
<path d="M778 704.9L781.4 711.7L774.6 711.7Z" fill="#d9e9fc"/>
<path d="M840 704.9L843.4 711.7L836.6 711.7Z" fill="#d9e9fc"/>
<path d="M468 708.3C468 708.3 505.2 708.3 530 708.3C554.8 708.3 567.2 606.22 592 606.22C616.8 606.22 629.2 708.3 654 708.3C678.8 708.3 691.2 708.3 716 708.3C740.8 708.3 753.2 708.3 778 708.3C802.8 708.3 840 708.3 840 708.3L840 708.3L468 708.3Z" fill="#18246a" fill-opacity="0.75" clip-path="url(#plotclip)"/>
<path d="M468 708.3C468 708.3 505.2 708.3 530 708.3C554.8 708.3 567.2 606.22 592 606.22C616.8 606.22 629.2 708.3 654 708.3C678.8 708.3 691.2 708.3 716 708.3C740.8 708.3 753.2 708.3 778 708.3C802.8 708.3 840 708.3 840 708.3" fill="none" stroke="#18246a" stroke-width="1.6" clip-path="url(#plotclip)"/>
<path d="M464.6 704.9L471.4 704.9L468 711.7Z" fill="#18246a"/>
<path d="M526.6 704.9L533.4 704.9L530 711.7Z" fill="#18246a"/>
<path d="M588.6 602.82L595.4 602.82L592 609.62Z" fill="#18246a"/>
<path d="M650.6 704.9L657.4 704.9L654 711.7Z" fill="#18246a"/>
<path d="M712.6 704.9L719.4 704.9L716 711.7Z" fill="#18246a"/>
<path d="M774.6 704.9L781.4 704.9L778 711.7Z" fill="#18246a"/>
<path d="M836.6 704.9L843.4 704.9L840 711.7Z" fill="#18246a"/>
<path d="M468 648.1C468 648.1 505.2 708.3 530 708.3C554.8 708.3 567.2 708.3 592 708.3C616.8 708.3 629.2 708.3 654 708.3C678.8 708.3 691.2 708.3 716 708.3C740.8 708.3 753.2 708.3 778 708.3C802.8 708.3 840 708.3 840 708.3L840 708.3L468 708.3Z" fill="#5068e0" fill-opacity="0.75" clip-path="url(#plotclip)"/>
<path d="M468 648.1C468 648.1 505.2 708.3 530 708.3C554.8 708.3 567.2 708.3 592 708.3C616.8 708.3 629.2 708.3 654 708.3C678.8 708.3 691.2 708.3 716 708.3C740.8 708.3 753.2 708.3 778 708.3C802.8 708.3 840 708.3 840 708.3" fill="none" stroke="#5068e0" stroke-width="1.6" clip-path="url(#plotclip)"/>
<circle cx="468" cy="648.1" r="3.4" fill="#5068e0"/>
<circle cx="530" cy="708.3" r="3.4" fill="#5068e0"/>
<circle cx="592" cy="708.3" r="3.4" fill="#5068e0"/>
<circle cx="654" cy="708.3" r="3.4" fill="#5068e0"/>
<circle cx="716" cy="708.3" r="3.4" fill="#5068e0"/>
<circle cx="778" cy="708.3" r="3.4" fill="#5068e0"/>
<circle cx="840" cy="708.3" r="3.4" fill="#5068e0"/>
<line x1="437" y1="708.5" x2="871" y2="708.5" stroke="#c0c0c0" stroke-width="1"/>
<line x1="437.5" y1="708" x2="437.5" y2="716.5" stroke="#c0c0c0" stroke-width="1"/>
<line x1="499.5" y1="708" x2="499.5" y2="716.5" stroke="#c0c0c0" stroke-width="1"/>
<line x1="561.5" y1="708" x2="561.5" y2="716.5" stroke="#c0c0c0" stroke-width="1"/>
<line x1="623.5" y1="708" x2="623.5" y2="716.5" stroke="#c0c0c0" stroke-width="1"/>
<line x1="685.5" y1="708" x2="685.5" y2="716.5" stroke="#c0c0c0" stroke-width="1"/>
<line x1="747.5" y1="708" x2="747.5" y2="716.5" stroke="#c0c0c0" stroke-width="1"/>
<line x1="809.5" y1="708" x2="809.5" y2="716.5" stroke="#c0c0c0" stroke-width="1"/>
<line x1="871.5" y1="708" x2="871.5" y2="716.5" stroke="#c0c0c0" stroke-width="1"/>
<text x="468" y="725.4" class="ax" text-anchor="middle">2020</text>
<text x="530" y="725.4" class="ax" text-anchor="middle">2021</text>
<text x="592" y="725.4" class="ax" text-anchor="middle">2022</text>
<text x="654" y="725.4" class="ax" text-anchor="middle">2023</text>
<text x="716" y="725.4" class="ax" text-anchor="middle">2024</text>
<text x="778" y="725.4" class="ax" text-anchor="middle">2025</text>
<text x="840" y="725.4" class="ax" text-anchor="middle">2026</text>
<text x="424" y="711.9" class="ax" text-anchor="end">0</text>
<text x="424" y="659.55" class="ax" text-anchor="end">1M</text>
<text x="424" y="607.2" class="ax" text-anchor="end">2M</text>
<text x="424" y="554.85" class="ax" text-anchor="end">3M</text>
<text x="424" y="502.5" class="ax" text-anchor="end">4M</text>
<text x="424" y="450.15" class="ax" text-anchor="end">5M</text>
<line x1="945" y1="445.4" x2="1368" y2="445.4" stroke="#e6e6e6" stroke-width="1"/>
<line x1="936" y1="445.4" x2="945" y2="445.4" stroke="#c0c0c0" stroke-width="1"/>
<line x1="945" y1="479.93" x2="1368" y2="479.93" stroke="#e6e6e6" stroke-width="1"/>
<line x1="936" y1="479.93" x2="945" y2="479.93" stroke="#c0c0c0" stroke-width="1"/>
<line x1="945" y1="514.46" x2="1368" y2="514.46" stroke="#e6e6e6" stroke-width="1"/>
<line x1="936" y1="514.46" x2="945" y2="514.46" stroke="#c0c0c0" stroke-width="1"/>
<line x1="945" y1="548.99" x2="1368" y2="548.99" stroke="#e6e6e6" stroke-width="1"/>
<line x1="936" y1="548.99" x2="945" y2="548.99" stroke="#c0c0c0" stroke-width="1"/>
<line x1="945" y1="583.52" x2="1368" y2="583.52" stroke="#e6e6e6" stroke-width="1"/>
<line x1="936" y1="583.52" x2="945" y2="583.52" stroke="#c0c0c0" stroke-width="1"/>
<line x1="945" y1="618.05" x2="1368" y2="618.05" stroke="#e6e6e6" stroke-width="1"/>
<line x1="936" y1="618.05" x2="945" y2="618.05" stroke="#c0c0c0" stroke-width="1"/>
<line x1="945" y1="652.58" x2="1368" y2="652.58" stroke="#e6e6e6" stroke-width="1"/>
<line x1="936" y1="652.58" x2="945" y2="652.58" stroke="#c0c0c0" stroke-width="1"/>
<line x1="945" y1="687.11" x2="1368" y2="687.11" stroke="#e6e6e6" stroke-width="1"/>
<line x1="936" y1="687.11" x2="945" y2="687.11" stroke="#c0c0c0" stroke-width="1"/>
<line x1="944.6" y1="444.5" x2="944.6" y2="687.5" stroke="#b0b0b0" stroke-width="1.2"/>
<text x="931.5" y="467.3" class="ax" style="font-size:10.8px;letter-spacing:0.5px" text-anchor="end">2020</text>
<text x="931.5" y="501.83" class="ax" style="font-size:10.8px;letter-spacing:0.5px" text-anchor="end">2021</text>
<text x="931.5" y="536.36" class="ax" style="font-size:10.8px;letter-spacing:0.5px" text-anchor="end">2022</text>
<text x="931.5" y="570.89" class="ax" style="font-size:10.8px;letter-spacing:0.5px" text-anchor="end">2023</text>
<text x="931.5" y="605.42" class="ax" style="font-size:10.8px;letter-spacing:0.5px" text-anchor="end">2024</text>
<text x="931.5" y="639.95" class="ax" style="font-size:10.8px;letter-spacing:0.5px" text-anchor="end">2025</text>
<text x="931.5" y="674.48" class="ax" style="font-size:10.8px;letter-spacing:0.5px" text-anchor="end">2026</text>
<text transform="translate(947.2 701) rotate(-45)" class="ax" text-anchor="end">0</text>
<text transform="translate(989.53 701) rotate(-45)" class="ax" text-anchor="end">500k</text>
<text transform="translate(1031.86 701) rotate(-45)" class="ax" text-anchor="end">1 000k</text>
<text transform="translate(1074.19 701) rotate(-45)" class="ax" text-anchor="end">1 500k</text>
<text transform="translate(1116.52 701) rotate(-45)" class="ax" text-anchor="end">2 000k</text>
<text transform="translate(1158.85 701) rotate(-45)" class="ax" text-anchor="end">2 500k</text>
<text transform="translate(1201.18 701) rotate(-45)" class="ax" text-anchor="end">3 000k</text>
<text transform="translate(1243.51 701) rotate(-45)" class="ax" text-anchor="end">3 500k</text>
<text transform="translate(1285.84 701) rotate(-45)" class="ax" text-anchor="end">4 000k</text>
<text transform="translate(1328.17 701) rotate(-45)" class="ax" text-anchor="end">4 500k</text>
<text transform="translate(1370.5 701) rotate(-45)" class="ax" text-anchor="end">5 000k</text>
<rect x="945" y="452.8" width="96" height="5" fill="#c4cbf2"/>
<rect x="945" y="455.5" width="96" height="2.5" fill="#ccd3f5"/>
<rect x="945" y="451.45" width="113" height="1.5" fill="#7a7a80"/>
<rect x="1041.5" y="453.7" width="242.5" height="1.8" fill="#1d3ee0"/>
<rect x="945" y="456.8" width="167.8" height="1.4" fill="#c8daf4"/>
<rect x="1113" y="457.4" width="28.3" height="1.6" fill="#94b4e4"/>
<rect x="945" y="458.7" width="168" height="1.2" fill="#bcd6f4"/>
<rect x="945" y="460.85" width="383.3" height="1.5" fill="#8595ea"/>
<rect x="945" y="462.8" width="7" height="1.4" fill="#7fb8f0"/>
<rect x="945" y="466.1" width="118.8" height="1.6" fill="#d9e9fc"/>
<rect x="945" y="469.6" width="55.8" height="1.8" fill="#2346e0"/>
<rect x="945" y="489.6" width="135" height="1.8" fill="#4d64e0"/>
<rect x="945" y="528.1" width="161" height="1.8" fill="#9cc6f0"/>
<rect x="945" y="590.3" width="383.3" height="2" fill="#18246a"/>
</svg>
<!-- TABLE CARD -->
<div class="card" id="tbl" style="left:68px;top:812px;width:1640px;height:200px">
 <div class="ctitle" style="top:23.5px">Construction</div>
 <div class="kebab" style="left:1605px;top:25px"><i style="top:0"></i><i style="top:5.9px"></i><i style="top:11.8px"></i></div>
</div>
<div class="abs" style="left:69px;top:927px;width:1638px;height:1px;background:#e9eaee"></div>
<div class="th" style="left:90.3px;top:897.5px">Reference</div>
<svg class="abs" style="left:162px;top:897px" width="8" height="13" viewBox="0 0 8 13"><path d="M1.2 4.6 L4 1.8 L6.8 4.6 M1.2 8.4 L4 11.2 L6.8 8.4" stroke="#6b6e76" stroke-width="1.3" fill="none"/></svg>
<div class="th" style="left:188px;top:897.5px">Name</div>
<svg class="abs" style="left:236px;top:897px" width="8" height="13" viewBox="0 0 8 13"><path d="M1.2 4.6 L4 1.8 L6.8 4.6 M1.2 8.4 L4 11.2 L6.8 8.4" stroke="#6b6e76" stroke-width="1.3" fill="none"/></svg>
<div class="th" style="left:331px;top:897.5px">Postcode</div>
<svg class="abs" style="left:399.2px;top:897px" width="8" height="13" viewBox="0 0 8 13"><path d="M1.2 4.6 L4 1.8 L6.8 4.6 M1.2 8.4 L4 11.2 L6.8 8.4" stroke="#6b6e76" stroke-width="1.3" fill="none"/></svg>
<div class="th" style="left:424.8px;top:897.5px">Project Net Value</div>
<svg class="abs" style="left:537.2px;top:897px" width="8" height="13" viewBox="0 0 8 13"><path d="M1.2 4.6 L4 1.8 L6.8 4.6 M1.2 8.4 L4 11.2 L6.8 8.4" stroke="#6b6e76" stroke-width="1.3" fill="none"/></svg>
<div class="th" style="left:563.3px;top:897.5px">Profit</div>
<svg class="abs" style="left:608.7px;top:897px" width="8" height="13" viewBox="0 0 8 13"><path d="M1.2 4.6 L4 1.8 L6.8 4.6 M1.2 8.4 L4 11.2 L6.8 8.4" stroke="#6b6e76" stroke-width="1.3" fill="none"/></svg>
<div class="th" style="left:655.5px;top:895.5px">Gross Profit (%)</div>
<div class="th" style="left:757.8px;top:897.5px">Total Net Cost</div>
<svg class="abs" style="left:853.2px;top:897px" width="8" height="13" viewBox="0 0 8 13"><path d="M1.2 4.6 L4 1.8 L6.8 4.6 M1.2 8.4 L4 11.2 L6.8 8.4" stroke="#6b6e76" stroke-width="1.3" fill="none"/></svg>
<div class="th" style="left:879.3px;top:897.5px">Project Type</div>
<svg class="abs" style="left:964.5px;top:897px" width="8" height="13" viewBox="0 0 8 13"><path d="M1.2 4.6 L4 1.8 L6.8 4.6 M1.2 8.4 L4 11.2 L6.8 8.4" stroke="#6b6e76" stroke-width="1.3" fill="none"/></svg>
<div class="th" style="left:1000.2px;top:897.5px">Destination</div>
<svg class="abs" style="left:1079.5px;top:897px" width="8" height="13" viewBox="0 0 8 13"><path d="M1.2 4.6 L4 1.8 L6.8 4.6 M1.2 8.4 L4 11.2 L6.8 8.4" stroke="#6b6e76" stroke-width="1.3" fill="none"/></svg>
<div class="th" style="left:1109.2px;top:897.5px">Project Director</div>
<svg class="abs" style="left:1211.6px;top:897px" width="8" height="13" viewBox="0 0 8 13"><path d="M1.2 4.6 L4 1.8 L6.8 4.6 M1.2 8.4 L4 11.2 L6.8 8.4" stroke="#6b6e76" stroke-width="1.3" fill="none"/></svg>
<div class="th" style="left:1237.8px;top:897.5px">Lead Engineer</div>
<svg class="abs" style="left:1333.7px;top:897px" width="8" height="13" viewBox="0 0 8 13"><path d="M1.2 4.6 L4 1.8 L6.8 4.6 M1.2 8.4 L4 11.2 L6.8 8.4" stroke="#6b6e76" stroke-width="1.3" fill="none"/></svg>
<div class="th" style="left:1359.5px;top:897.5px">Process</div>
<svg class="abs" style="left:1419.6px;top:897px" width="8" height="13" viewBox="0 0 8 13"><path d="M1.2 4.6 L4 1.8 L6.8 4.6 M1.2 8.4 L4 11.2 L6.8 8.4" stroke="#6b6e76" stroke-width="1.3" fill="none"/></svg>
<div class="td" style="left:90.3px;top:953px">2651/6SN538</div>
<div class="td" style="left:331px;top:953px">P5 9PD</div>
<div class="td" style="left:424.8px;top:953px">$3,317,527.80</div>
<div class="td" style="left:563.8px;top:953px">$1,400,861.13</div>
<div class="td" style="left:655.5px;top:953px">42.23%</div>
<div class="td" style="left:757.8px;top:953px">$1,916,666.67</div>
<div class="td" style="left:879.3px;top:953px;font-size:12.6px">Home Elevator</div>
<div class="td" style="left:1000.2px;top:953px;font-size:12.6px">Office Building</div>
<div class="td" style="left:1109.2px;top:953px;font-size:12.6px">Angelo Contreras</div>
<div class="td" style="left:1237.8px;top:953px;font-size:12.6px">Patrik Ray</div>
<div class="td" style="left:188px;top:943.5px;line-height:17.5px">Brandon Path<br>Apartments</div>
<div class="abs" style="left:1345px;top:929.5px;width:363px;height:56px;background:#5f5f5f"></div>
<div class="abs" style="left:1345px;top:985px;width:363px;height:4px;background:#8c8c8c"></div>
<div class="abs" style="left:1352.3px;top:938.7px;font-size:12.6px;font-weight:700;color:#fff;white-space:nowrap;line-height:15px">Construction - Finishes</div>
<svg class="abs" style="left:1353px;top:961px" width="13" height="13" viewBox="0 0 13 13"><circle cx="6.5" cy="6.5" r="5.4" stroke="#cdd0d8" stroke-width="1.3" fill="none"/><path d="M6.5 3.4 V6.8 L8.8 8.2" stroke="#cdd0d8" stroke-width="1.2" fill="none"/></svg>
<div class="abs" style="left:1374.2px;top:960.5px;font-size:12.7px;color:#cfd2db;white-space:nowrap;line-height:15px">Updated 23/10/2020</div>
<div class="abs" style="left:1664px;top:955px;width:30px;height:22.5px;background:#c9c9c9;border-radius:3px"></div>
<div class="abs" style="left:1670.5px;top:958.5px;font-size:12px;color:#5a5a5a;white-space:nowrap;line-height:14px">0%</div>
<div class="abs" style="left:1638px;top:917.5px;width:50px;height:50px;border-radius:50%;background:#3b50dc;box-shadow:0 2px 4px rgba(0,0,0,0.25)"></div>
<svg class="abs" style="left:1653px;top:932.5px" width="20" height="20" viewBox="0 0 24 24"><path d="M3 17.25V21h3.75L17.81 9.94l-3.75-3.75L3 17.25zM20.71 7.04c.39-.39.39-1.02 0-1.41l-2.34-2.34c-.39-.39-1.02-.39-1.41 0l-1.83 1.83 3.75 3.75 1.83-1.83z" fill="#fff"/></svg>
</body></html>
